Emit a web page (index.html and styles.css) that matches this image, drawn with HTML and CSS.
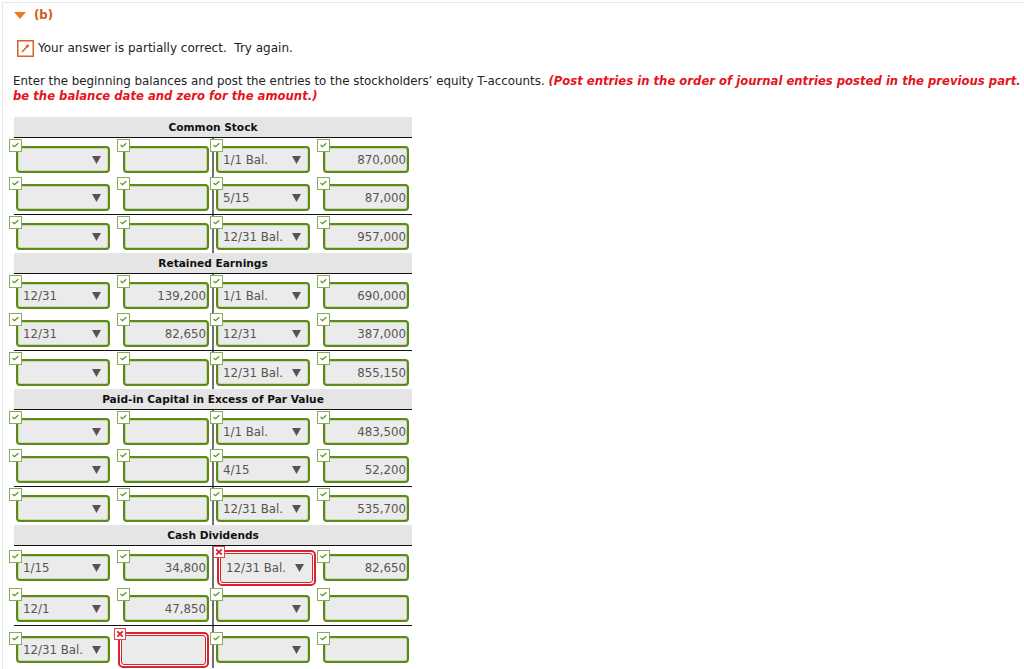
FILE: index.html
```html
<!DOCTYPE html>
<html>
<head>
<meta charset="utf-8">
<title>T-accounts</title>
<link rel="stylesheet" href="styles.css">
</head>
<body>
<div class="page">
  <div class="part-head"><svg class="tri" width="12" height="7" viewBox="0 0 12 7"><polygon points="0,0 12,0 6,7" fill="#ef7a1f"/></svg><span class="part-label">(b)</span></div>
  <div class="feedback"><svg class="edit-icon" width="17" height="17" viewBox="0 0 17 17"><rect x="0.75" y="0.75" width="15.5" height="15.5" fill="#fff" stroke="#d8622a" stroke-width="1.5"/><line x1="5" y1="12" x2="11.5" y2="5" stroke="#d8622a" stroke-width="1.6"/><line x1="9.5" y1="7" x2="11.5" y2="5" stroke="#d8622a" stroke-width="2.4"/></svg><span>Your answer is partially correct.&nbsp; Try again.</span></div>
  <p class="instr"><span class="line1">Enter the beginning balances and post the entries to the stockholders’ equity T-accounts. <em class="red">(Post entries in the order of journal entries posted in the previous part.</em></span><em class="red">be the balance date and zero for the amount.)</em></p>

  <div class="accounts">
    <section class="acct">
      <div class="acct-title">Common Stock</div>
      <div class="rows">
        <div class="row">
          <div class="cell c1"><span class="mark"><svg width="13" height="13" viewBox="0 0 13 13"><rect x="0.5" y="0.5" width="12" height="12" fill="#fff" stroke="#86ad55"/><polyline points="3.5,6 5.5,7.8 9.3,4.2" fill="none" stroke="#5c9426" stroke-width="1.2"/></svg></span><div class="box sel"><span class="val"></span><svg class="caret" width="9" height="8" viewBox="0 0 9 8"><polygon points="0,0 9,0 4.5,8" fill="#555"/></svg></div></div>
          <div class="cell c2"><span class="mark"><svg width="13" height="13" viewBox="0 0 13 13"><rect x="0.5" y="0.5" width="12" height="12" fill="#fff" stroke="#86ad55"/><polyline points="3.5,6 5.5,7.8 9.3,4.2" fill="none" stroke="#5c9426" stroke-width="1.2"/></svg></span><div class="box amt"></div></div>
          <div class="cell c3"><span class="mark"><svg width="13" height="13" viewBox="0 0 13 13"><rect x="0.5" y="0.5" width="12" height="12" fill="#fff" stroke="#86ad55"/><polyline points="3.5,6 5.5,7.8 9.3,4.2" fill="none" stroke="#5c9426" stroke-width="1.2"/></svg></span><div class="box sel"><span class="val">1/1 Bal.</span><svg class="caret" width="9" height="8" viewBox="0 0 9 8"><polygon points="0,0 9,0 4.5,8" fill="#555"/></svg></div></div>
          <div class="cell c4"><span class="mark"><svg width="13" height="13" viewBox="0 0 13 13"><rect x="0.5" y="0.5" width="12" height="12" fill="#fff" stroke="#86ad55"/><polyline points="3.5,6 5.5,7.8 9.3,4.2" fill="none" stroke="#5c9426" stroke-width="1.2"/></svg></span><div class="box amt">870,000</div></div>
        </div>
        <div class="row">
          <div class="cell c1"><span class="mark"><svg width="13" height="13" viewBox="0 0 13 13"><rect x="0.5" y="0.5" width="12" height="12" fill="#fff" stroke="#86ad55"/><polyline points="3.5,6 5.5,7.8 9.3,4.2" fill="none" stroke="#5c9426" stroke-width="1.2"/></svg></span><div class="box sel"><span class="val"></span><svg class="caret" width="9" height="8" viewBox="0 0 9 8"><polygon points="0,0 9,0 4.5,8" fill="#555"/></svg></div></div>
          <div class="cell c2"><span class="mark"><svg width="13" height="13" viewBox="0 0 13 13"><rect x="0.5" y="0.5" width="12" height="12" fill="#fff" stroke="#86ad55"/><polyline points="3.5,6 5.5,7.8 9.3,4.2" fill="none" stroke="#5c9426" stroke-width="1.2"/></svg></span><div class="box amt"></div></div>
          <div class="cell c3"><span class="mark"><svg width="13" height="13" viewBox="0 0 13 13"><rect x="0.5" y="0.5" width="12" height="12" fill="#fff" stroke="#86ad55"/><polyline points="3.5,6 5.5,7.8 9.3,4.2" fill="none" stroke="#5c9426" stroke-width="1.2"/></svg></span><div class="box sel"><span class="val">5/15</span><svg class="caret" width="9" height="8" viewBox="0 0 9 8"><polygon points="0,0 9,0 4.5,8" fill="#555"/></svg></div></div>
          <div class="cell c4"><span class="mark"><svg width="13" height="13" viewBox="0 0 13 13"><rect x="0.5" y="0.5" width="12" height="12" fill="#fff" stroke="#86ad55"/><polyline points="3.5,6 5.5,7.8 9.3,4.2" fill="none" stroke="#5c9426" stroke-width="1.2"/></svg></span><div class="box amt">87,000</div></div>
        </div>
        <div class="row bal">
          <div class="cell c1"><span class="mark"><svg width="13" height="13" viewBox="0 0 13 13"><rect x="0.5" y="0.5" width="12" height="12" fill="#fff" stroke="#86ad55"/><polyline points="3.5,6 5.5,7.8 9.3,4.2" fill="none" stroke="#5c9426" stroke-width="1.2"/></svg></span><div class="box sel"><span class="val"></span><svg class="caret" width="9" height="8" viewBox="0 0 9 8"><polygon points="0,0 9,0 4.5,8" fill="#555"/></svg></div></div>
          <div class="cell c2"><span class="mark"><svg width="13" height="13" viewBox="0 0 13 13"><rect x="0.5" y="0.5" width="12" height="12" fill="#fff" stroke="#86ad55"/><polyline points="3.5,6 5.5,7.8 9.3,4.2" fill="none" stroke="#5c9426" stroke-width="1.2"/></svg></span><div class="box amt"></div></div>
          <div class="cell c3"><span class="mark"><svg width="13" height="13" viewBox="0 0 13 13"><rect x="0.5" y="0.5" width="12" height="12" fill="#fff" stroke="#86ad55"/><polyline points="3.5,6 5.5,7.8 9.3,4.2" fill="none" stroke="#5c9426" stroke-width="1.2"/></svg></span><div class="box sel"><span class="val">12/31 Bal.</span><svg class="caret" width="9" height="8" viewBox="0 0 9 8"><polygon points="0,0 9,0 4.5,8" fill="#555"/></svg></div></div>
          <div class="cell c4"><span class="mark"><svg width="13" height="13" viewBox="0 0 13 13"><rect x="0.5" y="0.5" width="12" height="12" fill="#fff" stroke="#86ad55"/><polyline points="3.5,6 5.5,7.8 9.3,4.2" fill="none" stroke="#5c9426" stroke-width="1.2"/></svg></span><div class="box amt">957,000</div></div>
        </div>
      </div>
    </section>

    <section class="acct">
      <div class="acct-title">Retained Earnings</div>
      <div class="rows">
        <div class="row">
          <div class="cell c1"><span class="mark"><svg width="13" height="13" viewBox="0 0 13 13"><rect x="0.5" y="0.5" width="12" height="12" fill="#fff" stroke="#86ad55"/><polyline points="3.5,6 5.5,7.8 9.3,4.2" fill="none" stroke="#5c9426" stroke-width="1.2"/></svg></span><div class="box sel"><span class="val">12/31</span><svg class="caret" width="9" height="8" viewBox="0 0 9 8"><polygon points="0,0 9,0 4.5,8" fill="#555"/></svg></div></div>
          <div class="cell c2"><span class="mark"><svg width="13" height="13" viewBox="0 0 13 13"><rect x="0.5" y="0.5" width="12" height="12" fill="#fff" stroke="#86ad55"/><polyline points="3.5,6 5.5,7.8 9.3,4.2" fill="none" stroke="#5c9426" stroke-width="1.2"/></svg></span><div class="box amt">139,200</div></div>
          <div class="cell c3"><span class="mark"><svg width="13" height="13" viewBox="0 0 13 13"><rect x="0.5" y="0.5" width="12" height="12" fill="#fff" stroke="#86ad55"/><polyline points="3.5,6 5.5,7.8 9.3,4.2" fill="none" stroke="#5c9426" stroke-width="1.2"/></svg></span><div class="box sel"><span class="val">1/1 Bal.</span><svg class="caret" width="9" height="8" viewBox="0 0 9 8"><polygon points="0,0 9,0 4.5,8" fill="#555"/></svg></div></div>
          <div class="cell c4"><span class="mark"><svg width="13" height="13" viewBox="0 0 13 13"><rect x="0.5" y="0.5" width="12" height="12" fill="#fff" stroke="#86ad55"/><polyline points="3.5,6 5.5,7.8 9.3,4.2" fill="none" stroke="#5c9426" stroke-width="1.2"/></svg></span><div class="box amt">690,000</div></div>
        </div>
        <div class="row">
          <div class="cell c1"><span class="mark"><svg width="13" height="13" viewBox="0 0 13 13"><rect x="0.5" y="0.5" width="12" height="12" fill="#fff" stroke="#86ad55"/><polyline points="3.5,6 5.5,7.8 9.3,4.2" fill="none" stroke="#5c9426" stroke-width="1.2"/></svg></span><div class="box sel"><span class="val">12/31</span><svg class="caret" width="9" height="8" viewBox="0 0 9 8"><polygon points="0,0 9,0 4.5,8" fill="#555"/></svg></div></div>
          <div class="cell c2"><span class="mark"><svg width="13" height="13" viewBox="0 0 13 13"><rect x="0.5" y="0.5" width="12" height="12" fill="#fff" stroke="#86ad55"/><polyline points="3.5,6 5.5,7.8 9.3,4.2" fill="none" stroke="#5c9426" stroke-width="1.2"/></svg></span><div class="box amt">82,650</div></div>
          <div class="cell c3"><span class="mark"><svg width="13" height="13" viewBox="0 0 13 13"><rect x="0.5" y="0.5" width="12" height="12" fill="#fff" stroke="#86ad55"/><polyline points="3.5,6 5.5,7.8 9.3,4.2" fill="none" stroke="#5c9426" stroke-width="1.2"/></svg></span><div class="box sel"><span class="val">12/31</span><svg class="caret" width="9" height="8" viewBox="0 0 9 8"><polygon points="0,0 9,0 4.5,8" fill="#555"/></svg></div></div>
          <div class="cell c4"><span class="mark"><svg width="13" height="13" viewBox="0 0 13 13"><rect x="0.5" y="0.5" width="12" height="12" fill="#fff" stroke="#86ad55"/><polyline points="3.5,6 5.5,7.8 9.3,4.2" fill="none" stroke="#5c9426" stroke-width="1.2"/></svg></span><div class="box amt">387,000</div></div>
        </div>
        <div class="row bal">
          <div class="cell c1"><span class="mark"><svg width="13" height="13" viewBox="0 0 13 13"><rect x="0.5" y="0.5" width="12" height="12" fill="#fff" stroke="#86ad55"/><polyline points="3.5,6 5.5,7.8 9.3,4.2" fill="none" stroke="#5c9426" stroke-width="1.2"/></svg></span><div class="box sel"><span class="val"></span><svg class="caret" width="9" height="8" viewBox="0 0 9 8"><polygon points="0,0 9,0 4.5,8" fill="#555"/></svg></div></div>
          <div class="cell c2"><span class="mark"><svg width="13" height="13" viewBox="0 0 13 13"><rect x="0.5" y="0.5" width="12" height="12" fill="#fff" stroke="#86ad55"/><polyline points="3.5,6 5.5,7.8 9.3,4.2" fill="none" stroke="#5c9426" stroke-width="1.2"/></svg></span><div class="box amt"></div></div>
          <div class="cell c3"><span class="mark"><svg width="13" height="13" viewBox="0 0 13 13"><rect x="0.5" y="0.5" width="12" height="12" fill="#fff" stroke="#86ad55"/><polyline points="3.5,6 5.5,7.8 9.3,4.2" fill="none" stroke="#5c9426" stroke-width="1.2"/></svg></span><div class="box sel"><span class="val">12/31 Bal.</span><svg class="caret" width="9" height="8" viewBox="0 0 9 8"><polygon points="0,0 9,0 4.5,8" fill="#555"/></svg></div></div>
          <div class="cell c4"><span class="mark"><svg width="13" height="13" viewBox="0 0 13 13"><rect x="0.5" y="0.5" width="12" height="12" fill="#fff" stroke="#86ad55"/><polyline points="3.5,6 5.5,7.8 9.3,4.2" fill="none" stroke="#5c9426" stroke-width="1.2"/></svg></span><div class="box amt">855,150</div></div>
        </div>
      </div>
    </section>

    <section class="acct">
      <div class="acct-title">Paid-in Capital in Excess of Par Value</div>
      <div class="rows">
        <div class="row">
          <div class="cell c1"><span class="mark"><svg width="13" height="13" viewBox="0 0 13 13"><rect x="0.5" y="0.5" width="12" height="12" fill="#fff" stroke="#86ad55"/><polyline points="3.5,6 5.5,7.8 9.3,4.2" fill="none" stroke="#5c9426" stroke-width="1.2"/></svg></span><div class="box sel"><span class="val"></span><svg class="caret" width="9" height="8" viewBox="0 0 9 8"><polygon points="0,0 9,0 4.5,8" fill="#555"/></svg></div></div>
          <div class="cell c2"><span class="mark"><svg width="13" height="13" viewBox="0 0 13 13"><rect x="0.5" y="0.5" width="12" height="12" fill="#fff" stroke="#86ad55"/><polyline points="3.5,6 5.5,7.8 9.3,4.2" fill="none" stroke="#5c9426" stroke-width="1.2"/></svg></span><div class="box amt"></div></div>
          <div class="cell c3"><span class="mark"><svg width="13" height="13" viewBox="0 0 13 13"><rect x="0.5" y="0.5" width="12" height="12" fill="#fff" stroke="#86ad55"/><polyline points="3.5,6 5.5,7.8 9.3,4.2" fill="none" stroke="#5c9426" stroke-width="1.2"/></svg></span><div class="box sel"><span class="val">1/1 Bal.</span><svg class="caret" width="9" height="8" viewBox="0 0 9 8"><polygon points="0,0 9,0 4.5,8" fill="#555"/></svg></div></div>
          <div class="cell c4"><span class="mark"><svg width="13" height="13" viewBox="0 0 13 13"><rect x="0.5" y="0.5" width="12" height="12" fill="#fff" stroke="#86ad55"/><polyline points="3.5,6 5.5,7.8 9.3,4.2" fill="none" stroke="#5c9426" stroke-width="1.2"/></svg></span><div class="box amt">483,500</div></div>
        </div>
        <div class="row">
          <div class="cell c1"><span class="mark"><svg width="13" height="13" viewBox="0 0 13 13"><rect x="0.5" y="0.5" width="12" height="12" fill="#fff" stroke="#86ad55"/><polyline points="3.5,6 5.5,7.8 9.3,4.2" fill="none" stroke="#5c9426" stroke-width="1.2"/></svg></span><div class="box sel"><span class="val"></span><svg class="caret" width="9" height="8" viewBox="0 0 9 8"><polygon points="0,0 9,0 4.5,8" fill="#555"/></svg></div></div>
          <div class="cell c2"><span class="mark"><svg width="13" height="13" viewBox="0 0 13 13"><rect x="0.5" y="0.5" width="12" height="12" fill="#fff" stroke="#86ad55"/><polyline points="3.5,6 5.5,7.8 9.3,4.2" fill="none" stroke="#5c9426" stroke-width="1.2"/></svg></span><div class="box amt"></div></div>
          <div class="cell c3"><span class="mark"><svg width="13" height="13" viewBox="0 0 13 13"><rect x="0.5" y="0.5" width="12" height="12" fill="#fff" stroke="#86ad55"/><polyline points="3.5,6 5.5,7.8 9.3,4.2" fill="none" stroke="#5c9426" stroke-width="1.2"/></svg></span><div class="box sel"><span class="val">4/15</span><svg class="caret" width="9" height="8" viewBox="0 0 9 8"><polygon points="0,0 9,0 4.5,8" fill="#555"/></svg></div></div>
          <div class="cell c4"><span class="mark"><svg width="13" height="13" viewBox="0 0 13 13"><rect x="0.5" y="0.5" width="12" height="12" fill="#fff" stroke="#86ad55"/><polyline points="3.5,6 5.5,7.8 9.3,4.2" fill="none" stroke="#5c9426" stroke-width="1.2"/></svg></span><div class="box amt">52,200</div></div>
        </div>
        <div class="row bal">
          <div class="cell c1"><span class="mark"><svg width="13" height="13" viewBox="0 0 13 13"><rect x="0.5" y="0.5" width="12" height="12" fill="#fff" stroke="#86ad55"/><polyline points="3.5,6 5.5,7.8 9.3,4.2" fill="none" stroke="#5c9426" stroke-width="1.2"/></svg></span><div class="box sel"><span class="val"></span><svg class="caret" width="9" height="8" viewBox="0 0 9 8"><polygon points="0,0 9,0 4.5,8" fill="#555"/></svg></div></div>
          <div class="cell c2"><span class="mark"><svg width="13" height="13" viewBox="0 0 13 13"><rect x="0.5" y="0.5" width="12" height="12" fill="#fff" stroke="#86ad55"/><polyline points="3.5,6 5.5,7.8 9.3,4.2" fill="none" stroke="#5c9426" stroke-width="1.2"/></svg></span><div class="box amt"></div></div>
          <div class="cell c3"><span class="mark"><svg width="13" height="13" viewBox="0 0 13 13"><rect x="0.5" y="0.5" width="12" height="12" fill="#fff" stroke="#86ad55"/><polyline points="3.5,6 5.5,7.8 9.3,4.2" fill="none" stroke="#5c9426" stroke-width="1.2"/></svg></span><div class="box sel"><span class="val">12/31 Bal.</span><svg class="caret" width="9" height="8" viewBox="0 0 9 8"><polygon points="0,0 9,0 4.5,8" fill="#555"/></svg></div></div>
          <div class="cell c4"><span class="mark"><svg width="13" height="13" viewBox="0 0 13 13"><rect x="0.5" y="0.5" width="12" height="12" fill="#fff" stroke="#86ad55"/><polyline points="3.5,6 5.5,7.8 9.3,4.2" fill="none" stroke="#5c9426" stroke-width="1.2"/></svg></span><div class="box amt">535,700</div></div>
        </div>
      </div>
    </section>

    <section class="acct">
      <div class="acct-title">Cash Dividends</div>
      <div class="rows">
        <div class="row tall">
          <div class="cell c1"><span class="mark"><svg width="13" height="13" viewBox="0 0 13 13"><rect x="0.5" y="0.5" width="12" height="12" fill="#fff" stroke="#86ad55"/><polyline points="3.5,6 5.5,7.8 9.3,4.2" fill="none" stroke="#5c9426" stroke-width="1.2"/></svg></span><div class="box sel"><span class="val">1/15</span><svg class="caret" width="9" height="8" viewBox="0 0 9 8"><polygon points="0,0 9,0 4.5,8" fill="#555"/></svg></div></div>
          <div class="cell c2"><span class="mark"><svg width="13" height="13" viewBox="0 0 13 13"><rect x="0.5" y="0.5" width="12" height="12" fill="#fff" stroke="#86ad55"/><polyline points="3.5,6 5.5,7.8 9.3,4.2" fill="none" stroke="#5c9426" stroke-width="1.2"/></svg></span><div class="box amt">34,800</div></div>
          <div class="cell c3 err"><span class="mark"><svg width="12" height="12" viewBox="0 0 12 12"><rect x="0.5" y="0.5" width="11" height="11" fill="#fff" stroke="#e2474f"/><path d="M3.3 3.3 L8.7 8.7 M8.7 3.3 L3.3 8.7" stroke="#d9232d" stroke-width="1.8"/></svg></span><div class="box sel errbox"><div class="inner"><span class="val">12/31 Bal.</span><svg class="caret" width="9" height="8" viewBox="0 0 9 8"><polygon points="0,0 9,0 4.5,8" fill="#555"/></svg></div></div></div>
          <div class="cell c4 after-err"><span class="mark"><svg width="13" height="13" viewBox="0 0 13 13"><rect x="0.5" y="0.5" width="12" height="12" fill="#fff" stroke="#86ad55"/><polyline points="3.5,6 5.5,7.8 9.3,4.2" fill="none" stroke="#5c9426" stroke-width="1.2"/></svg></span><div class="box amt">82,650</div></div>
        </div>
        <div class="row">
          <div class="cell c1"><span class="mark"><svg width="13" height="13" viewBox="0 0 13 13"><rect x="0.5" y="0.5" width="12" height="12" fill="#fff" stroke="#86ad55"/><polyline points="3.5,6 5.5,7.8 9.3,4.2" fill="none" stroke="#5c9426" stroke-width="1.2"/></svg></span><div class="box sel"><span class="val">12/1</span><svg class="caret" width="9" height="8" viewBox="0 0 9 8"><polygon points="0,0 9,0 4.5,8" fill="#555"/></svg></div></div>
          <div class="cell c2"><span class="mark"><svg width="13" height="13" viewBox="0 0 13 13"><rect x="0.5" y="0.5" width="12" height="12" fill="#fff" stroke="#86ad55"/><polyline points="3.5,6 5.5,7.8 9.3,4.2" fill="none" stroke="#5c9426" stroke-width="1.2"/></svg></span><div class="box amt">47,850</div></div>
          <div class="cell c3"><span class="mark"><svg width="13" height="13" viewBox="0 0 13 13"><rect x="0.5" y="0.5" width="12" height="12" fill="#fff" stroke="#86ad55"/><polyline points="3.5,6 5.5,7.8 9.3,4.2" fill="none" stroke="#5c9426" stroke-width="1.2"/></svg></span><div class="box sel"><span class="val"></span><svg class="caret" width="9" height="8" viewBox="0 0 9 8"><polygon points="0,0 9,0 4.5,8" fill="#555"/></svg></div></div>
          <div class="cell c4"><span class="mark"><svg width="13" height="13" viewBox="0 0 13 13"><rect x="0.5" y="0.5" width="12" height="12" fill="#fff" stroke="#86ad55"/><polyline points="3.5,6 5.5,7.8 9.3,4.2" fill="none" stroke="#5c9426" stroke-width="1.2"/></svg></span><div class="box amt"></div></div>
        </div>
        <div class="row bal tall">
          <div class="cell c1"><span class="mark"><svg width="13" height="13" viewBox="0 0 13 13"><rect x="0.5" y="0.5" width="12" height="12" fill="#fff" stroke="#86ad55"/><polyline points="3.5,6 5.5,7.8 9.3,4.2" fill="none" stroke="#5c9426" stroke-width="1.2"/></svg></span><div class="box sel"><span class="val">12/31 Bal.</span><svg class="caret" width="9" height="8" viewBox="0 0 9 8"><polygon points="0,0 9,0 4.5,8" fill="#555"/></svg></div></div>
          <div class="cell c2 err"><span class="mark"><svg width="12" height="12" viewBox="0 0 12 12"><rect x="0.5" y="0.5" width="11" height="11" fill="#fff" stroke="#e2474f"/><path d="M3.3 3.3 L8.7 8.7 M8.7 3.3 L3.3 8.7" stroke="#d9232d" stroke-width="1.8"/></svg></span><div class="box amt errbox"><div class="inner"></div></div></div>
          <div class="cell c3"><span class="mark"><svg width="13" height="13" viewBox="0 0 13 13"><rect x="0.5" y="0.5" width="12" height="12" fill="#fff" stroke="#86ad55"/><polyline points="3.5,6 5.5,7.8 9.3,4.2" fill="none" stroke="#5c9426" stroke-width="1.2"/></svg></span><div class="box sel"><span class="val"></span><svg class="caret" width="9" height="8" viewBox="0 0 9 8"><polygon points="0,0 9,0 4.5,8" fill="#555"/></svg></div></div>
          <div class="cell c4"><span class="mark"><svg width="13" height="13" viewBox="0 0 13 13"><rect x="0.5" y="0.5" width="12" height="12" fill="#fff" stroke="#86ad55"/><polyline points="3.5,6 5.5,7.8 9.3,4.2" fill="none" stroke="#5c9426" stroke-width="1.2"/></svg></span><div class="box amt"></div></div>
        </div>
      </div>
    </section>
  </div>
</div>
</body>
</html>
```

FILE: styles.css
```css
html, body {
  margin: 0;
  padding: 0;
  overflow: hidden;
  background: #fff;
}

body {
  font-family: "DejaVu Sans", Verdana, sans-serif;
  font-size: 11.85px;
  color: #222;
}

.page {
  margin: 2px 0 0 2px;
  border-top: 1px solid #e6e6e6;
  border-left: 1px solid #e6e6e6;
  padding: 0 0 0 10px;
  height: 700px;
  box-sizing: border-box;
}

.part-head {
  display: flex;
  align-items: center;
  height: 16px;
  margin-top: 4px;
  padding-left: 1px;
}

.tri {
  display: block;
  margin-right: 8px;
}

.part-label {
  font-weight: bold;
  color: #cf5a17;
  font-size: 11.7px;
}

.feedback {
  display: flex;
  align-items: center;
  height: 18px;
  margin-top: 16px;
  padding-left: 4px;
  font-size: 12px;
}

.edit-icon {
  display: block;
  margin-right: 4px;
}

.instr {
  margin: 17px 0 0 0;
  line-height: 15px;
}

.line1 {
  display: block;
  white-space: nowrap;
}

.red {
  color: #e5131b;
  font-weight: bold;
  font-style: italic;
  font-size: 11.65px;
}

.accounts {
  margin-top: 13px;
  margin-left: 1px;
  width: 398px;
}

.acct-title {
  height: 20px;
  line-height: 20px;
  background: #e5e5e5;
  border-bottom: 1px solid #111;
  text-align: center;
  font-weight: bold;
  font-size: 10.6px;
  color: #111;
}

.rows {
  background: linear-gradient(to right, transparent 198px, #707070 198px, #707070 200px, transparent 200px);
}

.row {
  display: flex;
  align-items: flex-start;
  padding: 1px 0 3px 0;
}

.row.bal {
  border-top: 1px solid #111;
}

.row.tall {
  padding: 0 0 1px 0;
}

.row.bal.tall {
  padding: 2px 0 0 0;
}

.row.tall .cell:not(.err) {
  margin-top: 4px;
  padding-top: 4px;
}

.cell {
  position: relative;
  padding: 7px 0 0 6px;
}

.cell.c1 { margin-left: -5px; padding-left: 7px; }
.cell.c2 { margin-left: 7px; }
.cell.c3 { margin-left: 1px; }
.cell.c4 { margin-left: 7px; }

.cell.c2.err { margin-left: 4px; padding: 4px 0 0 4px; }
.cell.c3.err { margin-left: 4px; padding: 4px 0 0 4px; }
.cell.c4.after-err { margin-left: 1px; }

.mark {
  position: absolute;
  top: 0;
  left: 0;
  line-height: 0;
}

.mark svg { display: block; }

.box {
  box-sizing: border-box;
  height: 27px;
  border: 2px solid #5b8a17;
  border-radius: 4px;
  background: #ebebeb;
  box-shadow: inset 0 0 0 1px #c9d9b4;
  color: #555;
  font-size: 11.8px;
  display: flex;
  align-items: center;
}

.box.sel {
  width: 94px;
  padding: 0 7px 0 5px;
}

.box.amt {
  width: 86px;
  justify-content: flex-end;
  padding: 0 1px 0 4px;
}

.val {
  flex: 1;
  white-space: nowrap;
}

.caret {
  display: block;
  flex: none;
}

.box.errbox {
  height: 36px;
  border: 2px solid #d9232d;
  border-radius: 5px;
  background: #fff;
  box-shadow: none;
  padding: 1px;
}

.box.sel.errbox { width: 99px; }
.box.amt.errbox { width: 91px; }

.errbox .inner {
  box-sizing: border-box;
  flex: 1;
  align-self: stretch;
  display: flex;
  align-items: center;
  border: 1px solid #d9232d;
  border-radius: 3px;
  background: #ebebeb;
  padding: 0 8px 0 5px;
}
```
